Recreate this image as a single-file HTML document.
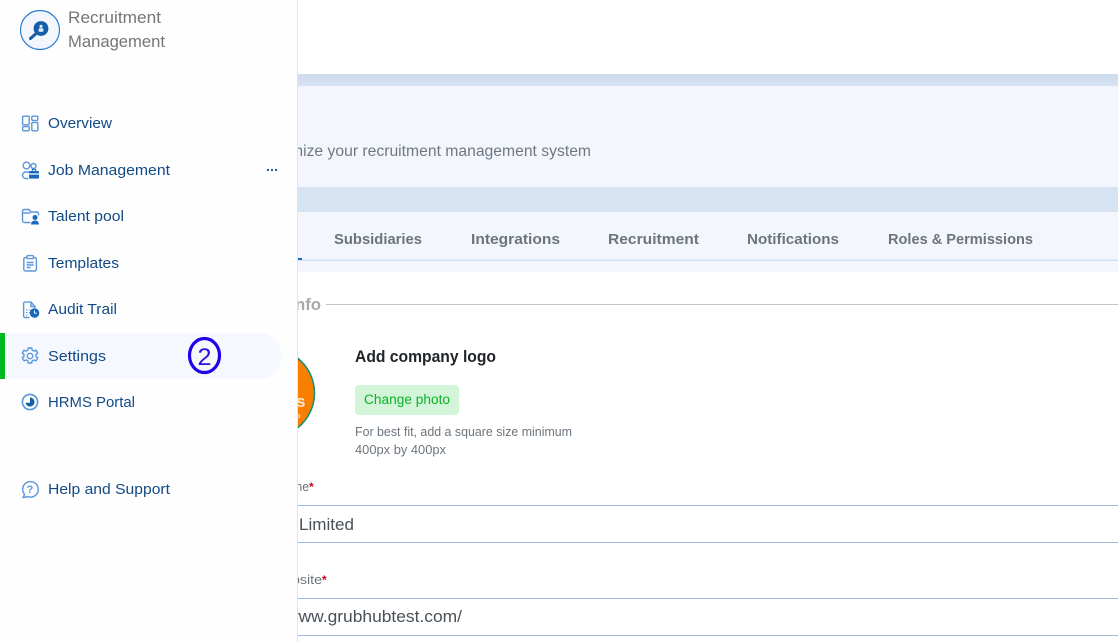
<!DOCTYPE html>
<html><head><meta charset="utf-8"><title>Settings</title>
<style>html,body{margin:0;padding:0;background:#fff;width:1118px;height:642px;overflow:hidden}svg{display:block}text{font-family:"Liberation Sans",sans-serif}</style>
</head><body>
<svg width="1118" height="642" viewBox="0 0 1118 642" xmlns="http://www.w3.org/2000/svg">
<defs><linearGradient id="g" x1="0" y1="0" x2="0" y2="1"><stop offset="0" stop-color="#cddbeb"/><stop offset="1" stop-color="#d6e3f3"/></linearGradient></defs>
<rect width="1118" height="642" fill="#fff"/>
<rect x="297" y="74" width="821" height="12" fill="url(#g)"/>
<rect x="297" y="86" width="821" height="101" fill="#f3f6fc"/>
<rect x="297" y="187" width="821" height="25" fill="#d6e3f3"/>
<rect x="297" y="212" width="821" height="60" fill="#f3f6fc"/>
<rect x="297" y="259.5" width="821" height="1.5" fill="#cfdfef"/>
<rect x="297" y="258" width="5" height="2" fill="#1a6fc4"/>
<text x="290" y="156" font-size="15.5" fill="#6f7882" textLength="301" lengthAdjust="spacingAndGlyphs">mize your recruitment management system</text>
<g font-size="15" font-weight="700" fill="#6c757d">
<text x="334" y="244" textLength="88" lengthAdjust="spacingAndGlyphs">Subsidiaries</text>
<text x="471" y="244" textLength="89" lengthAdjust="spacingAndGlyphs">Integrations</text>
<text x="608" y="244" textLength="91" lengthAdjust="spacingAndGlyphs">Recruitment</text>
<text x="747" y="244" textLength="92" lengthAdjust="spacingAndGlyphs">Notifications</text>
<text x="888" y="244" textLength="145" lengthAdjust="spacingAndGlyphs">Roles &amp; Permissions</text>
</g>
<text x="295" y="310" font-size="16.5" font-weight="700" fill="#a8a8a8" textLength="26" lengthAdjust="spacingAndGlyphs">nfo</text>
<rect x="326" y="304" width="792" height="1" fill="#c4c4c4"/>
<circle cx="270" cy="393" r="44.5" fill="#f97f00" stroke="#0f8f7a" stroke-width="1.5"/>
<text x="296" y="407" font-size="17" font-weight="700" fill="#ffe9d2">s</text>
<circle cx="298" cy="416" r="2.5" fill="#fbb26b"/>
<text x="355" y="362" font-size="16.5" font-weight="700" fill="#212529" textLength="141" lengthAdjust="spacingAndGlyphs">Add company logo</text>
<rect x="355" y="385" width="104" height="30" rx="4" fill="#d2f4d8"/>
<text x="364" y="404" font-size="13.5" fill="#0db02b" textLength="86" lengthAdjust="spacingAndGlyphs">Change photo</text>
<text x="355" y="436" font-size="12.5" fill="#6c757d" textLength="217" lengthAdjust="spacingAndGlyphs">For best fit, add a square size minimum</text>
<text x="355" y="454" font-size="12.5" fill="#6c757d" textLength="91" lengthAdjust="spacingAndGlyphs">400px by 400px</text>
<text x="292" y="491" font-size="13" fill="#6c757d" textLength="17" lengthAdjust="spacingAndGlyphs">me</text>
<text x="309" y="491" font-size="12" font-weight="700" fill="#d0021b">*</text>
<rect x="297" y="505" width="821" height="1" fill="#9dbde0"/>
<text x="299" y="530" font-size="16.5" fill="#495057" textLength="55" lengthAdjust="spacingAndGlyphs">Limited</text>
<rect x="297" y="542" width="821" height="1" fill="#9dbde0"/>
<text x="292" y="584" font-size="13" fill="#6c757d" textLength="30" lengthAdjust="spacingAndGlyphs">bsite</text>
<text x="322" y="584" font-size="12" font-weight="700" fill="#d0021b">*</text>
<rect x="297" y="598" width="821" height="1" fill="#9dbde0"/>
<text x="286" y="622" font-size="17" fill="#495057" textLength="176" lengthAdjust="spacingAndGlyphs">www.grubhubtest.com/</text>
<rect x="297" y="635" width="821" height="1" fill="#9dbde0"/>

<rect x="0" y="0" width="297" height="642" fill="#fefefe"/>
<rect x="297" y="0" width="1" height="642" fill="#d9e5f3"/>
<circle cx="40" cy="30" r="19.5" fill="#f3f7fd" stroke="#2a7dd0" stroke-width="1.2"/>
<circle cx="41" cy="28.5" r="7.4" fill="#155fa8"/>
<path d="M35.8 33.8L30.5 38.5" stroke="#155fa8" stroke-width="3" stroke-linecap="round"/>
<circle cx="41" cy="26.3" r="1.6" fill="#dbe8f6"/><rect x="38.6" y="28.3" width="4.8" height="3.6" rx="1" fill="#dbe8f6"/>
<text x="68" y="23" font-size="16.5" fill="#757575" textLength="93" lengthAdjust="spacingAndGlyphs">Recruitment</text>
<text x="68" y="47" font-size="16.5" fill="#757575" textLength="97" lengthAdjust="spacingAndGlyphs">Management</text>

<path d="M5 333H259a23 23 0 0 1 0 46H5z" fill="#f5f8fe"/>
<rect x="0" y="333" width="5" height="46" fill="#00b81f"/>

<g font-size="15" fill="#124a86">
<text x="48" y="128" textLength="64" lengthAdjust="spacingAndGlyphs">Overview</text>
<text x="48" y="175" textLength="122" lengthAdjust="spacingAndGlyphs">Job Management</text>
<text x="48" y="221" textLength="76" lengthAdjust="spacingAndGlyphs">Talent pool</text>
<text x="48" y="268" textLength="71" lengthAdjust="spacingAndGlyphs">Templates</text>
<text x="48" y="314" textLength="69" lengthAdjust="spacingAndGlyphs">Audit Trail</text>
<text x="48" y="361" textLength="58" lengthAdjust="spacingAndGlyphs">Settings</text>
<text x="48" y="407" textLength="87" lengthAdjust="spacingAndGlyphs">HRMS Portal</text>
<text x="48" y="494" textLength="122" lengthAdjust="spacingAndGlyphs">Help and Support</text>
</g>
<g fill="#124a86"><circle cx="268" cy="170" r="1.1"/><circle cx="272" cy="170" r="1.1"/><circle cx="276" cy="170" r="1.1"/></g>

<g fill="none" stroke="#5a97da" stroke-width="1.4">
<rect x="22.6" y="116.2" width="6.6" height="8.6" rx="1"/><rect x="22.6" y="126.6" width="6.6" height="4.2" rx="1"/>
<rect x="31.8" y="116.2" width="6" height="4.2" rx="1"/><rect x="31.8" y="122.4" width="6" height="8.4" rx="1"/>
<circle cx="26.5" cy="165.5" r="3.4"/><circle cx="33.5" cy="166" r="2.5"/>
<path d="M29.5 172H26a3.5 3.3 0 0 0 0 6.6h2.5"/>
<path d="M30.5 222.5H24.5a2 2 0 0 1-2-2V211a1.5 1.5 0 0 1 1.5-1.5h5l2 2.5h6a1.5 1.5 0 0 1 1.5 1.5v2"/><path d="M22.5 213h8"/>
<rect x="23.8" y="257.5" width="12.6" height="13.5" rx="1.8"/><rect x="27" y="255.6" width="6.4" height="3" rx="1" fill="#fefefe"/>
<path d="M26.6 262.5h7M26.6 265h7M26.6 267.5h4"/>
<path d="M29.5 317.5H25a1.4 1.4 0 0 1-1.4-1.4V303.5a1.4 1.4 0 0 1 1.4-1.4h6l4 4.4v1.5"/><path d="M31 302.2v4.4h4"/>
<path d="M26 310h1.5M29 310h1.5M26 312.5h1.5M29 312.5h1.5M26 315h1.5" stroke-width="1"/>
<path d="M28.3 348h3.4l.5 2.2 1.6.8 2.2-.8 1.7 2.8-1.7 1.6v1.8l1.7 1.6-1.7 2.8-2.2-.8-1.6.8-.5 2.2h-3.4l-.5-2.2-1.6-.8-2.2.8-1.7-2.8 1.7-1.6v-1.8l-1.7-1.6 1.7-2.8 2.2.8 1.6-.8z"/><circle cx="30" cy="356" r="2.7"/>
<circle cx="30" cy="402" r="7.6" stroke-width="1.6"/>
<path d="M23 497.5l1.6-3a7.8 7.8 0 1 1 3.2 2.2z" stroke-width="1.4" stroke-linejoin="round"/>
</g>
<path d="M30 171h8a1 1 0 0 1 1 1v1.4H29V172a1 1 0 0 1 1-1z M29 174.6h10v3a1 1 0 0 1-1 1H30a1 1 0 0 1-1-1z" fill="#1a69bd"/>
<path d="M32.3 171v-1.6h3.4V171" fill="none" stroke="#1a69bd" stroke-width="1"/>
<circle cx="35" cy="217.5" r="2.5" fill="#1a69bd"/><path d="M31 224.5a4 4 0 0 1 8 0z" fill="#1a69bd"/>
<circle cx="34.5" cy="313" r="4.8" fill="#1a69bd"/><path d="M34.5 310.5v2.7h2.4" fill="none" stroke="#fff" stroke-width=".9"/>
<path d="M30 397.5a4.5 4.5 0 1 1-4.4 5.2H30z" fill="#155fa8"/>
<text x="30" y="493" font-size="11" font-weight="700" fill="#5a97da" text-anchor="middle">?</text>

<ellipse cx="204.5" cy="355.5" rx="15" ry="17" fill="none" stroke="#2200e8" stroke-width="3.2"/>
<text x="197.5" y="365" font-size="24" fill="#2a10e0" textLength="14" lengthAdjust="spacingAndGlyphs">2</text>
</svg>
</body></html>
